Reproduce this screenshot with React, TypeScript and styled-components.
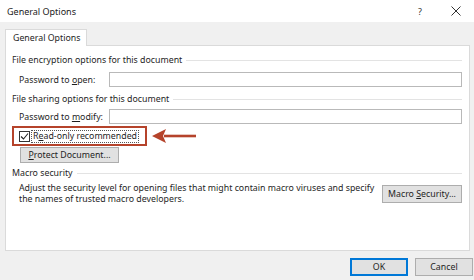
import React from "react";
import styled, { createGlobalStyle } from "styled-components";

const GlobalStyle = createGlobalStyle`
  html, body {
    margin: 0;
    padding: 0;
    background: #f0f0f0;
  }
  body {
    width: 474px;
    height: 280px;
    overflow: hidden;
    font-family: "Noto Sans", "Open Sans", sans-serif;
    font-size: 8.8px;
    color: #1e1e1e;
  }
`;

const Dialog = styled.div`
  width: 474px;
  height: 280px;
  display: flex;
  flex-direction: column;
  background: #f0f0f0;
`;

const TitleBar = styled.div`
  height: 22px;
  background: #ffffff;
  display: flex;
  align-items: center;
  padding-left: 7px;
  font-size: 9px;
  color: #222;
`;

const Title = styled.div`
  flex: 1;
`;

const TitleButton = styled.div<{ $w: number }>`
  width: ${(p) => p.$w}px;
  display: flex;
  justify-content: center;
  align-items: center;
  color: #333;
`;

const Body = styled.div`
  padding: 7px 4px 0 5px;
  display: flex;
  flex-direction: column;
`;

const Tab = styled.div`
  width: 82px;
  height: 17px;
  background: #ffffff;
  border: 1px solid #dadada;
  border-bottom: none;
  display: flex;
  align-items: center;
  padding-left: 7px;
  box-sizing: border-box;
  margin-bottom: -1px;
  position: relative;
  z-index: 1;
`;

const Panel = styled.div`
  height: 206px;
  box-sizing: border-box;
  background: #ffffff;
  border: 1px solid #dadada;
  padding: 8px 7px 0 6px;
  display: flex;
  flex-direction: column;
`;

const GroupHeader = styled.div<{ $mt?: number }>`
  display: flex;
  align-items: center;
  height: 12px;
  margin-top: ${(p) => p.$mt ?? 0}px;
  white-space: nowrap;
  &::after {
    content: "";
    flex: 1;
    height: 1px;
    background: #e3e3e3;
    margin-left: 4px;
  }
`;

const FieldRow = styled.div<{ $mt: number }>`
  display: flex;
  align-items: center;
  margin-top: ${(p) => p.$mt}px;
  padding-left: 7px;
`;

const FieldLabel = styled.div`
  width: 90px;
  white-space: nowrap;
`;

const TextInput = styled.div`
  flex: 1;
  height: 15px;
  box-sizing: border-box;
  border: 1px solid #b9b9b9;
  background: #fff;
`;

const HighlightRow = styled.div`
  display: flex;
  align-items: center;
  margin-top: 2px;
`;

const Highlight = styled.div`
  width: 135px;
  height: 20px;
  box-sizing: border-box;
  border: 2px solid #b5432b;
  display: flex;
  align-items: center;
  padding-left: 5px;
`;

const CheckBox = styled.div`
  width: 11px;
  height: 11px;
  box-sizing: border-box;
  border: 1px solid #333;
  background: #fff;
  display: flex;
  align-items: center;
  justify-content: center;
`;

const CheckLabel = styled.div`
  margin-left: 2px;
  padding: 0 1px;
  outline: 1px dotted #555;
  line-height: 11px;
  white-space: nowrap;
`;

const Button = styled.div<{ $w: number; $h: number; $primary?: boolean }>`
  width: ${(p) => p.$w}px;
  height: ${(p) => p.$h}px;
  box-sizing: border-box;
  background: #e1e1e1;
  border: ${(p) => (p.$primary ? "2px solid #0078d7" : "1px solid #adadad")};
  display: flex;
  align-items: center;
  justify-content: center;
  white-space: nowrap;
`;

const ProtectWrap = styled.div`
  margin-top: 1px;
  padding-left: 8px;
`;

const MacroRow = styled.div`
  display: flex;
  align-items: center;
  padding-left: 7px;
  margin-top: 4px;
`;

const MacroText = styled.div`
  flex: 1;
  line-height: 11px;
  white-space: nowrap;
`;

const Footer = styled.div`
  display: flex;
  justify-content: flex-end;
  gap: 7px;
  margin-top: 7px;
  margin-right: -3px;
`;

export default function App() {
  return (
    <Dialog>
      <GlobalStyle />
      <TitleBar>
        <Title>General Options</Title>
        <TitleButton $w={36}>?</TitleButton>
        <TitleButton $w={36}>
          <svg width="10" height="10" viewBox="0 0 10 10">
            <path d="M0.5 0.5 L9.5 9.5 M9.5 0.5 L0.5 9.5" stroke="#333" strokeWidth="1" />
          </svg>
        </TitleButton>
      </TitleBar>
      <Body>
        <Tab>General Options</Tab>
        <Panel>
          <GroupHeader>File encryption options for this document</GroupHeader>
          <FieldRow $mt={6}>
            <FieldLabel>
              Password to <u>o</u>pen:
            </FieldLabel>
            <TextInput />
          </FieldRow>
          <GroupHeader $mt={6}>File sharing options for this document</GroupHeader>
          <FieldRow $mt={4}>
            <FieldLabel>
              Password to <u>m</u>odify:
            </FieldLabel>
            <TextInput />
          </FieldRow>
          <HighlightRow>
            <Highlight>
              <CheckBox>
                <svg width="9" height="9" viewBox="0 0 9 9">
                  <path d="M1 4.5 L3.5 7 L8 1.5" stroke="#222" strokeWidth="1.1" fill="none" />
                </svg>
              </CheckBox>
              <CheckLabel>
                R<u>e</u>ad-only recommended
              </CheckLabel>
            </Highlight>
            <svg width="46" height="16" viewBox="0 0 46 16" style={{ marginLeft: 5 }}>
              <path d="M12 6.7 H44 V9.3 H12 Z" fill="#b5432b" />
              <path d="M0 8 L14 1 L11 8 L14 15 Z" fill="#b5432b" />
            </svg>
          </HighlightRow>
          <ProtectWrap>
            <Button $w={99} $h={16}>
              <span>
                <u>P</u>rotect Document...
              </span>
            </Button>
          </ProtectWrap>
          <GroupHeader $mt={4}>Macro security</GroupHeader>
          <MacroRow>
            <MacroText>
              Adjust the security level for opening files that might contain macro viruses and specify
              <br />
              the names of trusted macro developers.
            </MacroText>
            <Button $w={80} $h={18}>
              <span>
                Macro <u>S</u>ecurity...
              </span>
            </Button>
          </MacroRow>
        </Panel>
        <Footer>
          <Button $w={58} $h={18} $primary>
            OK
          </Button>
          <Button $w={58} $h={18}>
            Cancel
          </Button>
        </Footer>
      </Body>
    </Dialog>
  );
}
